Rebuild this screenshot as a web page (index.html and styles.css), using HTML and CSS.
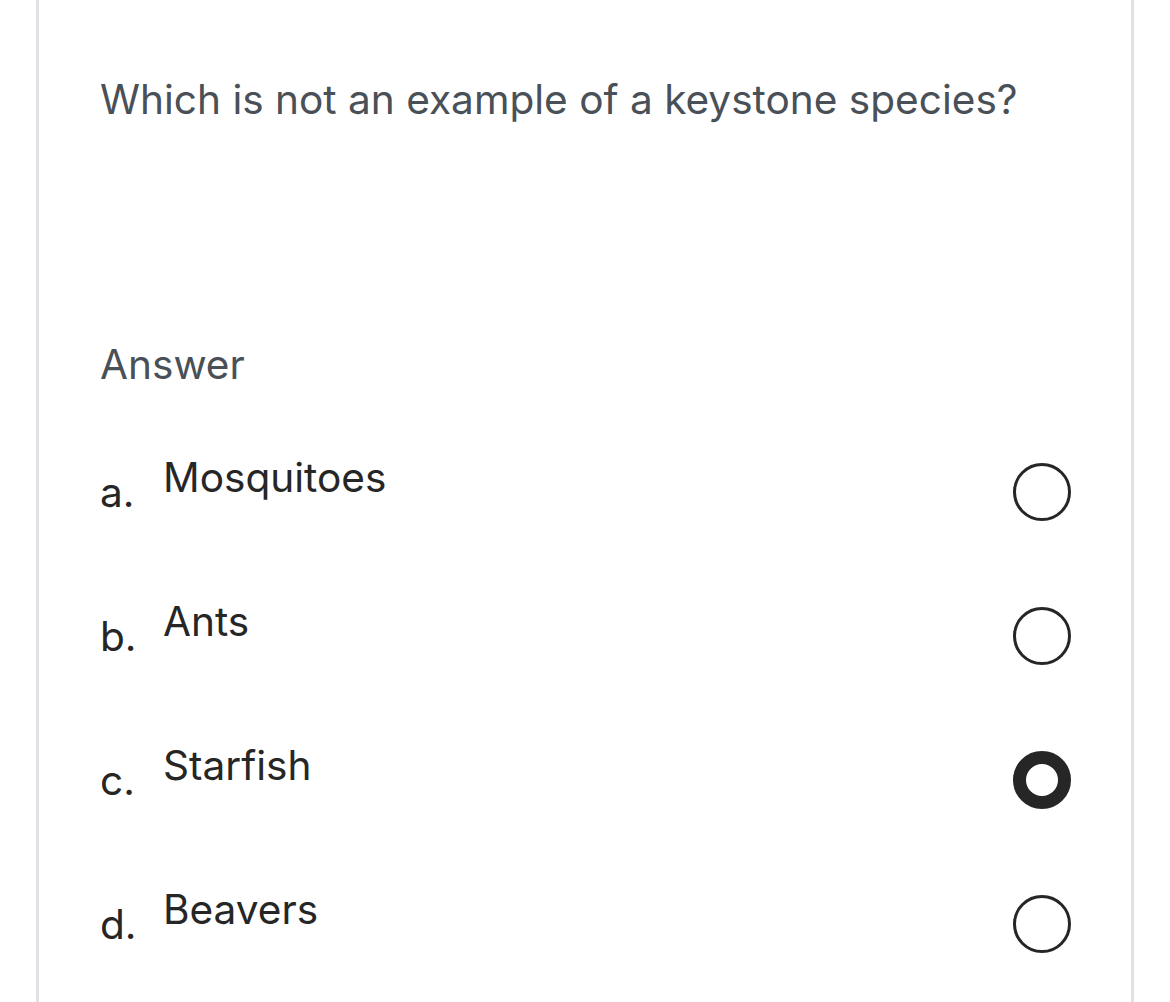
FILE: index.html
```html
<!DOCTYPE html>
<html>
<head>
<meta charset="utf-8">
<link rel="stylesheet" href="styles.css">
</head>
<body>
<div class="card">
  <p class="question">Which is not an example of a keystone species?</p>
  <p class="answer-title">Answer</p>
  <div class="options">
    <div class="option">
      <span class="letter">a.</span>
      <span class="text">Mosquitoes</span>
      <span class="radio"></span>
    </div>
    <div class="option">
      <span class="letter">b.</span>
      <span class="text">Ants</span>
      <span class="radio"></span>
    </div>
    <div class="option">
      <span class="letter">c.</span>
      <span class="text">Starfish</span>
      <span class="radio checked"></span>
    </div>
    <div class="option">
      <span class="letter">d.</span>
      <span class="text">Beavers</span>
      <span class="radio"></span>
    </div>
  </div>
</div>
</body>
</html>
```
FILE: styles.css
```css
html, body {
  margin: 0;
  padding: 0;
  background: #ffffff;
  overflow: hidden;
}
body {
  font-family: Inter, "Noto Sans", sans-serif;
}
.card {
  margin-left: 36px;
  width: 1098px;
  height: 1002px;
  border-left: 3px solid #dee2e6;
  border-right: 3px solid #dee2e6;
  padding: 76px 60px 0 61px;
  box-sizing: border-box;
  overflow: hidden;
}
.question {
  margin: 0;
  font-size: 40.6px;
  line-height: 48px;
  color: #495057;
}
.answer-title {
  margin: 217px 0 0 0;
  font-size: 40.6px;
  line-height: 48px;
  color: #495057;
}
.options {
  margin-top: 65px;
}
.option {
  display: flex;
  align-items: flex-start;
  height: 144px;
  color: #262626;
  font-size: 40.6px;
  line-height: 48px;
}
.letter {
  width: 63px;
  padding-top: 15px;
  flex-shrink: 0;
}
.text {
  flex: 1;
}
.radio {
  flex-shrink: 0;
  width: 52px;
  height: 52px;
  margin-top: 9px;
  border: 3px solid #262626;
  border-radius: 50%;
  box-sizing: content-box;
}
.radio.checked {
  width: 32px;
  height: 32px;
  border-width: 13px;
}
```
